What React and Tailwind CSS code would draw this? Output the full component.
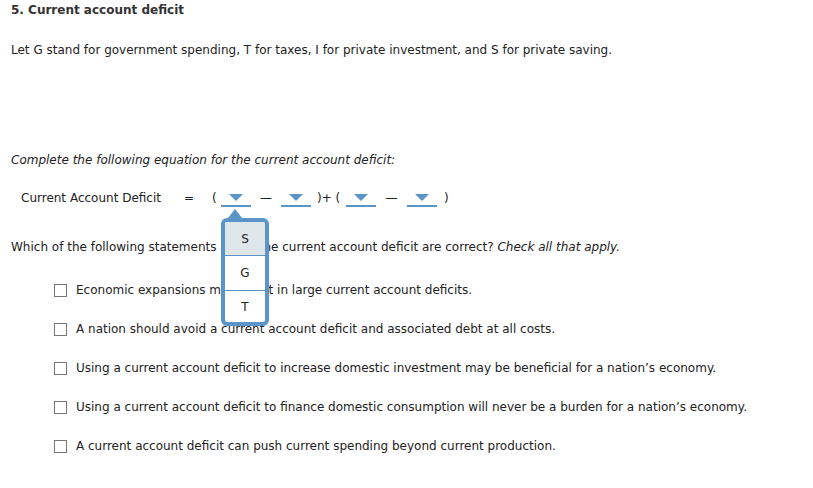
import React from 'react';

const font = { fontFamily: '"DejaVu Sans", Verdana, sans-serif' };

function Drop({ open }) {
  return (
    <div className="relative w-[30px] h-[18px] border-b-2 border-[#5b94c6] flex items-start justify-center">
      <svg width="14" height="8" viewBox="0 0 14 8" className="mt-[5px]">
        <polygon points="0,0 14,0 7,7" fill="#5b94c6" />
      </svg>
      {open && (
        <div className="absolute left-0 top-[20px] z-10">
          <svg width="14" height="9" viewBox="0 0 14 9" className="ml-[7px] block">
            <polygon points="0,9 7,0 14,9" fill="#5b94c6" />
          </svg>
          <div className="w-[48px] rounded-[6px] border-4 border-[#5b94c6] bg-white overflow-hidden text-[12px] text-[#222]">
            <div className="h-[34px] flex items-center justify-center bg-[#dfe6ea] border-b border-[#5b94c6]">S</div>
            <div className="h-[35px] flex items-center justify-center border-b border-[#5b94c6]">G</div>
            <div className="h-[31px] flex items-center justify-center">T</div>
          </div>
        </div>
      )}
    </div>
  );
}

const options = [
  'Economic expansions may result in large current account deficits.',
  'A nation should avoid a current account deficit and associated debt at all costs.',
  'Using a current account deficit to increase domestic investment may be beneficial for a nation\u2019s economy.',
  'Using a current account deficit to finance domestic consumption will never be a burden for a nation\u2019s economy.',
  'A current account deficit can push current spending beyond current production.',
];

export default function App() {
  return (
    <div className="w-[813px] h-[488px] bg-white text-[#222] text-[12px] overflow-hidden" style={font}>
      <div className="pl-[11px] pt-[2px]">
        <h1 className="text-[12px] font-bold text-[#333] leading-[16px]">5. Current account deficit</h1>
        <p className="mt-[24px] leading-[16px]">
          Let G stand for government spending, T for taxes, I for private investment, and S for private saving.
        </p>
        <p className="mt-[94px] italic leading-[16px]">Complete the following equation for the current account deficit:</p>

        <div className="mt-[21px] ml-[10px] flex items-end h-[18px] leading-[16px]">
          <span className="w-[163px] pb-[1px]">Current Account Deficit</span>
          <span className="w-[28px] pb-[1px]">=</span>
          <span className="w-[9px] pb-[1px]">(</span>
          <Drop open />
          <span className="w-[30px] pb-[1px] text-center">&mdash;</span>
          <Drop />
          <span className="w-[35px] pb-[1px] pl-[6px]">)+ (</span>
          <Drop />
          <span className="w-[31px] pb-[1px] text-center">&mdash;</span>
          <Drop />
          <span className="pb-[1px] pl-[7px]">)</span>
        </div>

        <p className="mt-[32px] leading-[16px]">
          Which of the following statements about the current account deficit are correct? <i>Check all that apply.</i>
        </p>

        <div className="mt-[27px] ml-[43px] flex flex-col gap-[23px]">
          {options.map((o) => (
            <label key={o} className="flex items-center h-[16px] leading-[16px]">
              <span className="w-[13px] h-[13px] border border-[#767676] bg-white shrink-0" />
              <span className="ml-[9px]">{o}</span>
            </label>
          ))}
        </div>
      </div>
    </div>
  );
}
